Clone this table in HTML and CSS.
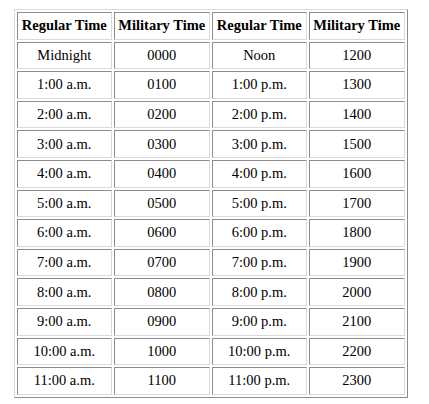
FILE: index.html
```html
<!DOCTYPE html>
<html>
<head>
<meta charset="utf-8">
<link rel="stylesheet" href="styles.css">
</head>
<body>
<table class="times">
  <thead>
    <tr><th>Regular Time</th><th>Military Time</th><th>Regular Time</th><th>Military Time</th></tr>
  </thead>
  <tbody>
    <tr><td>Midnight</td><td>0000</td><td>Noon</td><td>1200</td></tr>
    <tr><td>1:00 a.m.</td><td>0100</td><td>1:00 p.m.</td><td>1300</td></tr>
    <tr><td>2:00 a.m.</td><td>0200</td><td>2:00 p.m.</td><td>1400</td></tr>
    <tr><td>3:00 a.m.</td><td>0300</td><td>3:00 p.m.</td><td>1500</td></tr>
    <tr><td>4:00 a.m.</td><td>0400</td><td>4:00 p.m.</td><td>1600</td></tr>
    <tr><td>5:00 a.m.</td><td>0500</td><td>5:00 p.m.</td><td>1700</td></tr>
    <tr><td>6:00 a.m.</td><td>0600</td><td>6:00 p.m.</td><td>1800</td></tr>
    <tr><td>7:00 a.m.</td><td>0700</td><td>7:00 p.m.</td><td>1900</td></tr>
    <tr><td>8:00 a.m.</td><td>0800</td><td>8:00 p.m.</td><td>2000</td></tr>
    <tr><td>9:00 a.m.</td><td>0900</td><td>9:00 p.m.</td><td>2100</td></tr>
    <tr><td>10:00 a.m.</td><td>1000</td><td>10:00 p.m.</td><td>2200</td></tr>
    <tr><td>11:00 a.m.</td><td>1100</td><td>11:00 p.m.</td><td>2300</td></tr>
  </tbody>
</table>
</body>
</html>
```

FILE: styles.css
```css
html, body {
  background: #ffffff;
}
body {
  margin: 9px 0 0 14px;
  font-family: "Liberation Serif", "Times New Roman", serif;
  font-size: 14.5px;
  color: #000000;
}
.times {
  width: 394px;
  border-collapse: separate;
  border-spacing: 2px;
  border: 1px solid;
  border-color: #d9d9d9 #8c8c8c #8c8c8c #d9d9d9;
}
.times th,
.times td {
  height: 27.6px;
  box-sizing: border-box;
  padding: 0 3px;
  text-align: center;
  vertical-align: middle;
  border: 1px solid;
  border-color: #8c8c8c #d9d9d9 #d9d9d9 #8c8c8c;
  white-space: nowrap;
}
.times th {
  font-weight: bold;
}
```
